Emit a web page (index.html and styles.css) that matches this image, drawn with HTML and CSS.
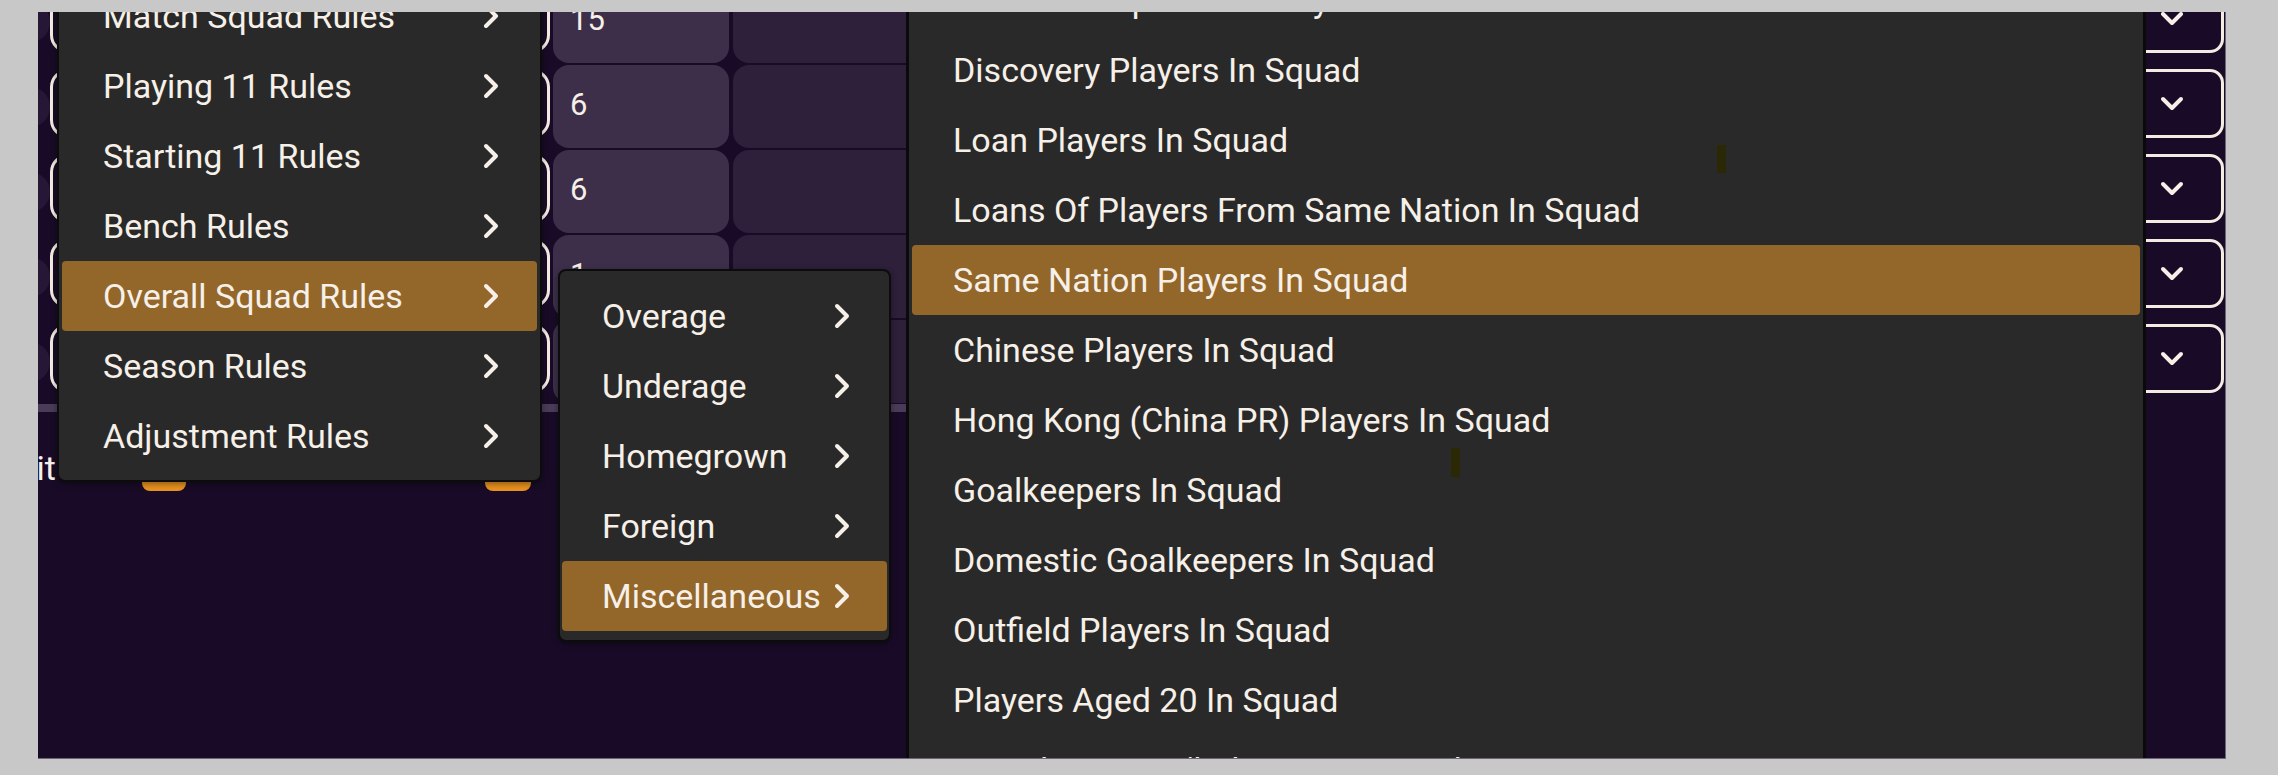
FILE: index.html
```
<!DOCTYPE html>
<html>

<head>
    <title>Squad Rules</title>
    <meta name="viewport" content="width=device-width, initial-scale=1.0">
    <link rel="stylesheet" href="styles.css">
</head>

<body>
    <div class="app">
        <!-- Rules table behind the menus -->
        <div class="sheet">
            <div class="row">
                <div class="avatar"></div>
                <div class="select"></div>
                <div class="num">15</div>
                <div class="cell"></div>
                <div class="spacer"></div>
                <div class="drop"><svg width="24" height="16" viewBox="0 0 24 16"><polyline points="3,3 12,12 21,3" /></svg></div>
            </div>
            <div class="row">
                <div class="avatar"></div>
                <div class="select"></div>
                <div class="num">6</div>
                <div class="cell"></div>
                <div class="spacer"></div>
                <div class="drop"><svg width="24" height="16" viewBox="0 0 24 16"><polyline points="3,3 12,12 21,3" /></svg></div>
            </div>
            <div class="row">
                <div class="avatar"></div>
                <div class="select"></div>
                <div class="num">6</div>
                <div class="cell"></div>
                <div class="spacer"></div>
                <div class="drop"><svg width="24" height="16" viewBox="0 0 24 16"><polyline points="3,3 12,12 21,3" /></svg></div>
            </div>
            <div class="row">
                <div class="avatar"></div>
                <div class="select"></div>
                <div class="num">1</div>
                <div class="cell"></div>
                <div class="spacer"></div>
                <div class="drop"><svg width="24" height="16" viewBox="0 0 24 16"><polyline points="3,3 12,12 21,3" /></svg></div>
            </div>
            <div class="row">
                <div class="avatar"></div>
                <div class="select"></div>
                <div class="num">3</div>
                <div class="cell"></div>
                <div class="spacer"></div>
                <div class="drop"><svg width="24" height="16" viewBox="0 0 24 16"><polyline points="3,3 12,12 21,3" /></svg></div>
            </div>
            <div class="scrollbar"></div>
            <div class="footer">
                <span class="footer-label">Limit</span>
                <span class="toggle"></span>
                <span class="toggle toggle-right"></span>
            </div>
        </div>

        <!-- Rule category menu -->
        <div class="menu menu-main">
            <div class="menu-item">Match Squad Rules <svg class="chev" width="16" height="26" viewBox="0 0 16 26"><polyline points="3,3 13,13 3,23" /></svg></div>
            <div class="menu-item">Playing 11 Rules <svg class="chev" width="16" height="26" viewBox="0 0 16 26"><polyline points="3,3 13,13 3,23" /></svg></div>
            <div class="menu-item">Starting 11 Rules <svg class="chev" width="16" height="26" viewBox="0 0 16 26"><polyline points="3,3 13,13 3,23" /></svg></div>
            <div class="menu-item">Bench Rules <svg class="chev" width="16" height="26" viewBox="0 0 16 26"><polyline points="3,3 13,13 3,23" /></svg></div>
            <div class="menu-item active">Overall Squad Rules <svg class="chev" width="16" height="26" viewBox="0 0 16 26"><polyline points="3,3 13,13 3,23" /></svg></div>
            <div class="menu-item">Season Rules <svg class="chev" width="16" height="26" viewBox="0 0 16 26"><polyline points="3,3 13,13 3,23" /></svg></div>
            <div class="menu-item">Adjustment Rules <svg class="chev" width="16" height="26" viewBox="0 0 16 26"><polyline points="3,3 13,13 3,23" /></svg></div>
        </div>

        <!-- Overall squad sub menu -->
        <div class="menu menu-sub">
            <div class="menu-item">Overage <svg class="chev" width="16" height="26" viewBox="0 0 16 26"><polyline points="3,3 13,13 3,23" /></svg></div>
            <div class="menu-item">Underage <svg class="chev" width="16" height="26" viewBox="0 0 16 26"><polyline points="3,3 13,13 3,23" /></svg></div>
            <div class="menu-item">Homegrown <svg class="chev" width="16" height="26" viewBox="0 0 16 26"><polyline points="3,3 13,13 3,23" /></svg></div>
            <div class="menu-item">Foreign <svg class="chev" width="16" height="26" viewBox="0 0 16 26"><polyline points="3,3 13,13 3,23" /></svg></div>
            <div class="menu-item active">Miscellaneous <svg class="chev" width="16" height="26" viewBox="0 0 16 26"><polyline points="3,3 13,13 3,23" /></svg></div>
        </div>

        <!-- Miscellaneous rule list -->
        <div class="list-panel">
            <div class="list-item">Club Developed U21 Players</div>
            <div class="list-item">Discovery Players In Squad</div>
            <div class="list-item">Loan Players In Squad</div>
            <div class="list-item">Loans Of Players From Same Nation In Squad</div>
            <div class="list-item active">Same Nation Players In Squad</div>
            <div class="list-item">Chinese Players In Squad</div>
            <div class="list-item">Hong Kong (China PR) Players In Squad</div>
            <div class="list-item">Goalkeepers In Squad</div>
            <div class="list-item">Domestic Goalkeepers In Squad</div>
            <div class="list-item">Outfield Players In Squad</div>
            <div class="list-item">Players Aged 20 In Squad</div>
            <div class="list-item">Min Chinese Int'l Players In Squad</div>
            <span class="caret caret-one"></span>
            <span class="caret caret-two"></span>
        </div>
    </div>
</body>

</html>
```

FILE: styles.css
```
body {
    margin: 0;
    padding: 12px 0 0 38px;
    background-color: #c8c8c8;
    font-family: Roboto, 'Liberation Sans', sans-serif;
    color: #f6f0e8;
}

.app {
    position: relative;
    width: 2188px;
    height: 747px;
    box-sizing: border-box;
    overflow: hidden;
    background-color: #190b27;
    border-right: 1px solid #6f6479;
    border-bottom: 1px solid #6f6479;
}

/* Table behind the menus, scrolled a little */
.sheet {
    width: 2204px;
    margin: -33px 0 0 -18px;
}

.row {
    display: flex;
    height: 85px;
}

.avatar {
    flex-shrink: 0;
    width: 30px;
    display: flex;
    align-items: center;
}

.avatar::before {
    content: '';
    width: 40px;
    height: 40px;
    margin-left: -10px;
    border-radius: 50%;
    background-color: #261736;
}

.select {
    flex-shrink: 0;
    width: 500px;
    height: 69px;
    margin-top: 5px;
    box-sizing: border-box;
    border: 3px solid #f4ece2;
    border-radius: 18px;
}

.num {
    flex-shrink: 0;
    width: 176px;
    height: 83px;
    margin: 1px 0 0 3px;
    box-sizing: border-box;
    padding: 0 0 4px 17px;
    display: flex;
    align-items: center;
    background-color: #3d2f4a;
    border-radius: 16px;
    font-size: 31px;
}

.cell {
    flex-shrink: 0;
    width: 767px;
    height: 83px;
    margin: 1px 0 0 4px;
    background-color: #2e1f3a;
    border-radius: 16px;
}

.spacer {
    flex: 1;
}

.drop {
    flex-shrink: 0;
    width: 324px;
    height: 69px;
    margin-top: 5px;
    box-sizing: border-box;
    padding-right: 37px;
    display: flex;
    align-items: center;
    justify-content: flex-end;
    border: 3px solid #f4ece2;
    border-radius: 14px;
}

.drop svg polyline {
    fill: none;
    stroke: #f6f0e8;
    stroke-width: 4;
    stroke-linecap: round;
    stroke-linejoin: round;
}

.scrollbar {
    width: 1480px;
    height: 8px;
    background-color: #4a3c58;
}

.footer {
    display: flex;
    height: 46px;
    margin: 33px 0 0 -40px;
}

.footer-label {
    width: 162px;
    font-size: 34px;
    line-height: 46px;
    white-space: nowrap;
    overflow: hidden;
}

.toggle {
    width: 44px;
    height: 46px;
    background-color: #e8921f;
    border-radius: 8px;
}

.toggle-right {
    width: 46px;
    margin-left: 299px;
}

/* Menus */
.menu {
    position: absolute;
    box-sizing: border-box;
    background-color: #292929;
    border: 2px solid #0c0c0c;
    border-radius: 8px;
    box-shadow: 0 2px 6px rgba(0, 0, 0, 0.4);
}

.menu-main {
    left: 19px;
    top: -42px;
    width: 485px;
    padding: 9px 3px;
}

.menu-sub {
    left: 520px;
    top: 257px;
    width: 333px;
    padding: 10px 2px 9px;
}

.menu-item {
    display: flex;
    align-items: center;
    justify-content: space-between;
    height: 70px;
    padding: 0 38px 0 41px;
    border-radius: 4px;
    font-size: 34px;
    white-space: nowrap;
}

.menu-sub .menu-item {
    padding: 0 37px 0 40px;
}

.menu-item.active,
.list-item.active {
    background-color: #93662a;
}

.chev {
    flex-shrink: 0;
}

.chev polyline {
    fill: none;
    stroke: #f6f0e8;
    stroke-width: 4;
    stroke-linecap: round;
    stroke-linejoin: round;
}

.list-panel {
    position: absolute;
    left: 868px;
    top: -49px;
    width: 1240px;
    height: 900px;
    box-sizing: border-box;
    padding: 0 3px;
    background-color: #292929;
    border: 2px solid #0a0a0a;
    border-left-width: 3px;
    border-right-width: 3px;
}

.list-item {
    height: 70px;
    padding-left: 41px;
    display: flex;
    align-items: center;
    border-radius: 4px;
    font-size: 34px;
    white-space: nowrap;
}

.caret {
    position: absolute;
    width: 9px;
    background-color: #2a2805;
}

.caret-one {
    left: 808px;
    top: 180px;
    height: 28px;
}

.caret-two {
    left: 542px;
    top: 483px;
    height: 29px;
}
```
